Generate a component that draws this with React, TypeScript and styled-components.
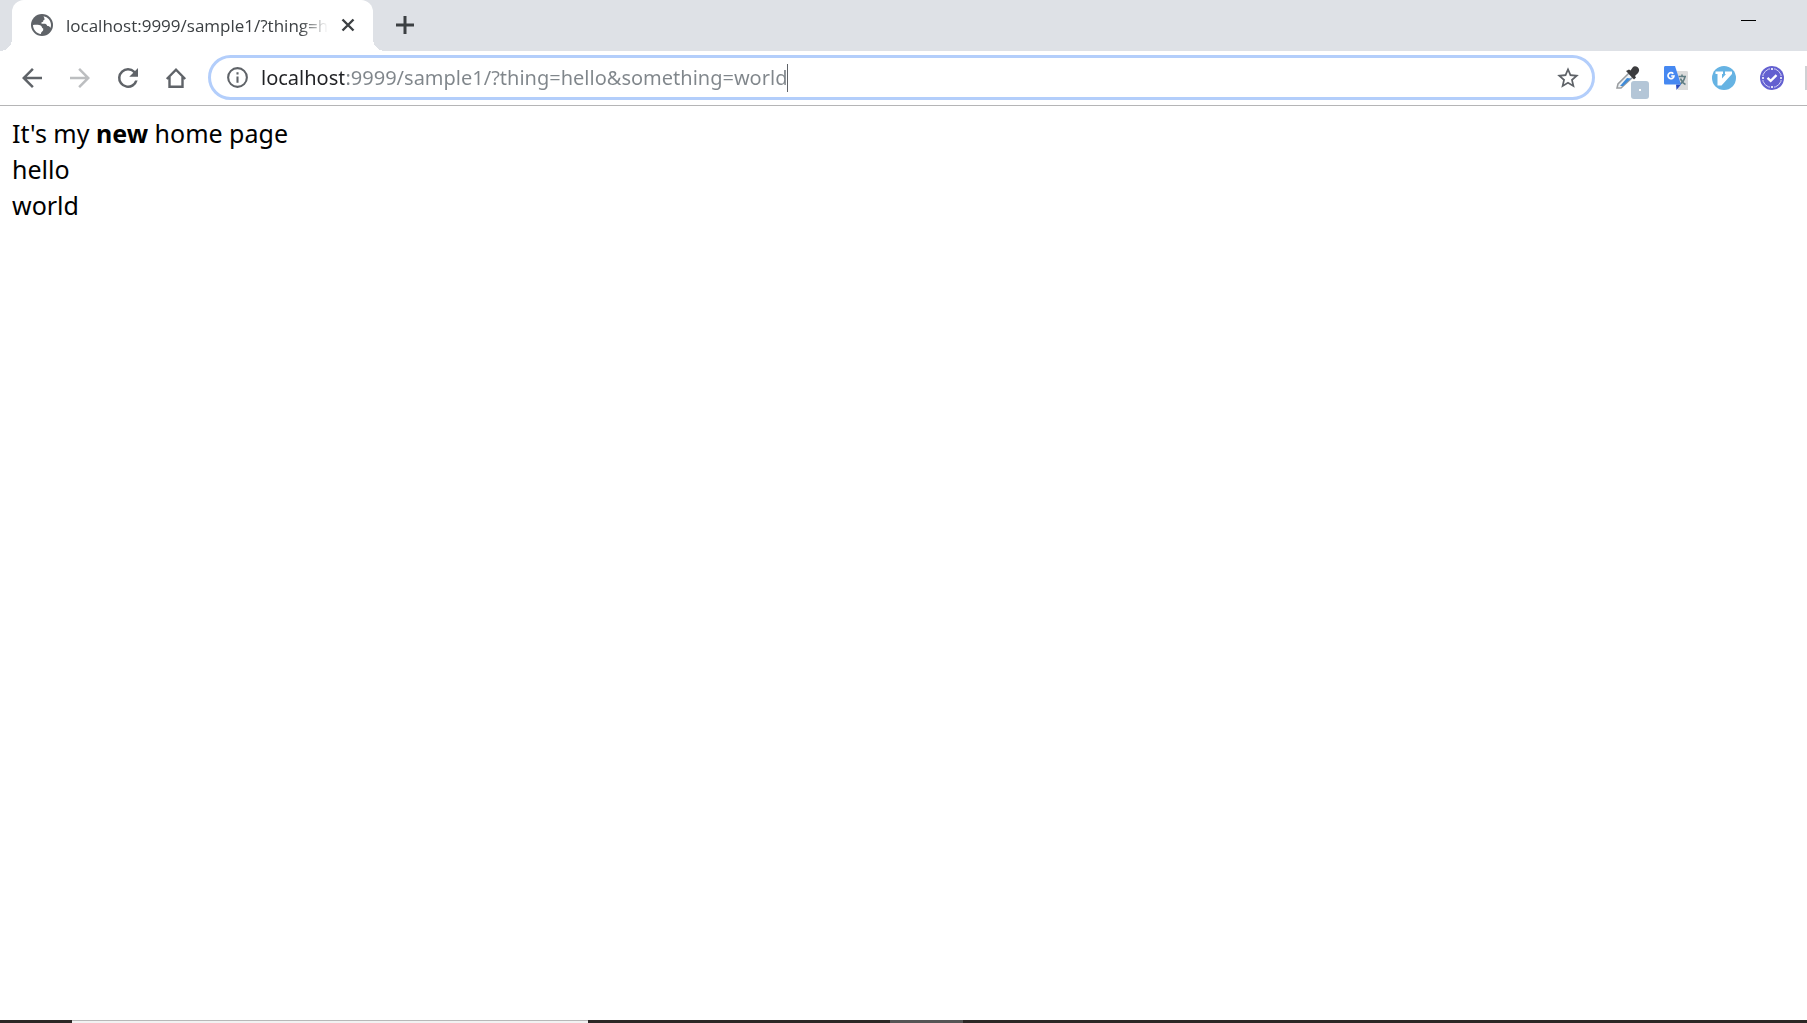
import React from "react";
import styled, { createGlobalStyle } from "styled-components";

const GlobalStyle = createGlobalStyle`
  * { box-sizing: border-box; }
  body { margin: 0; background: #fff; }
`;

const ui = `"Open Sans", "Noto Sans", sans-serif`;

const Window = styled.div`
  display: flex;
  flex-direction: column;
  min-height: 100vh;
  font-family: ${ui};
`;

const TabStrip = styled.header`
  display: flex;
  align-items: stretch;
  height: 51px;
  padding-left: 12px;
  background: #dee1e6;
`;

const Tab = styled.div`
  position: relative;
  display: flex;
  align-items: center;
  width: 361px;
  padding: 0 17px 1px 18px;
  background: #fff;
  border-radius: 12px 12px 0 0;

  &::before,
  &::after {
    content: "";
    position: absolute;
    bottom: 0;
    width: 12px;
    height: 12px;
  }
  &::before {
    right: 100%;
    background: radial-gradient(circle at 0 0, transparent 12px, #fff 12px);
  }
  &::after {
    left: 100%;
    background: radial-gradient(circle at 100% 0, transparent 12px, #fff 12px);
  }
`;

const TabTitle = styled.span`
  flex: 1;
  min-width: 0;
  margin: 0 12px;
  padding-top: 2px;
  overflow: hidden;
  white-space: nowrap;
  font-size: 17px;
  line-height: 24px;
  color: #3c4043;
  mask-image: linear-gradient(to right, #000 calc(100% - 28px), transparent);
`;

const IconButton = styled.button<{ $size?: number; $color?: string }>`
  display: flex;
  flex: none;
  align-items: center;
  justify-content: center;
  width: ${(p) => p.$size ?? 24}px;
  height: ${(p) => p.$size ?? 24}px;
  padding: 0;
  border: 0;
  background: none;
  color: ${(p) => p.$color ?? "#5f6368"};

  svg { flex: none; }
`;

const NewTab = styled(IconButton)`
  margin: 13px 0 0 20px;
`;

const Minimize = styled(IconButton)`
  margin: 8px 46px 0 auto;
`;

const Toolbar = styled.nav`
  display: flex;
  align-items: center;
  gap: 20px;
  padding: 4px 0 5px 20px;
  border-bottom: 1px solid #b5b5b6;
`;

const IconGroup = styled.div`
  display: flex;
  align-items: center;
  gap: 24px;
`;

const Extensions = styled(IconGroup)`
  padding: 0 1px;
`;

const Omnibox = styled.form`
  display: flex;
  flex: 1;
  align-items: center;
  height: 45px;
  padding: 0 12px 0 14px;
  border: 3px solid #b3cefb;
  border-radius: 23px;
`;

const Address = styled.input`
  field-sizing: content;
  margin-left: 12px;
  padding: 1px 0 0;
  border: 0;
  outline: 0;
  font-family: "Noto Sans", "Open Sans", sans-serif;
  font-size: 20px;
  line-height: 28px;
  color: transparent;
  background: linear-gradient(to right, #202124 83px, #80868b 83px);
  background-clip: text;
`;

const Caret = styled.span`
  width: 1px;
  height: 28px;
  margin-right: auto;
  background: #5f6368;
`;

const Divider = styled.span`
  width: 2px;
  height: 24px;
  background: #cfd1d4;
`;

const Badged = styled.span`
  position: relative;
  display: flex;
`;

const Badge = styled.span`
  position: absolute;
  top: 15px;
  left: 15px;
  display: grid;
  place-items: center;
  width: 18px;
  height: 18px;
  border-radius: 3px;
  background: #b4c6d7;

  &::after {
    content: "";
    width: 2px;
    height: 2px;
    background: #fff;
  }
`;

const Page = styled.main`
  flex: 1;
  padding: 9px 12px;
  font-family: "Noto Sans", sans-serif;
  font-size: 25px;
  line-height: 36px;
  color: #000;
`;

const Taskbar = styled.footer`
  display: flex;
  height: 3px;
  background: #2b2725;
`;

const TaskSearch = styled.div`
  width: 516px;
  margin-left: 72px;
  border-top: 1px solid #b8b8b8;
  background: #f2f2f2;
`;

const ActiveTask = styled.div`
  width: 73px;
  margin-left: 302px;
  background: #555;
`;

const Icon = ({ d, size = 30 }: { d: string; size?: number }) => (
  <svg width={size} height={size} viewBox="0 0 24 24" fill="currentColor" aria-hidden="true">
    <path d={d} />
  </svg>
);

const BACK = "M20 11H7.83l5.59-5.59L12 4l-8 8 8 8 1.41-1.41L7.83 13H20v-2z";
const FORWARD = "M12 4l-1.41 1.41L16.17 11H4v2h12.17l-5.58 5.59L12 20l8-8z";
const RELOAD =
  "M17.65 6.35A7.96 7.96 0 0 0 12 4a8 8 0 1 0 7.73 10h-2.08A6 6 0 1 1 12 6c1.66 0 3.14.69 4.22 1.78L13 11h7V4z";
const INFO =
  "M11 7h2v2h-2zm0 4h2v6h-2zm1-9a10 10 0 1 0 0 20 10 10 0 0 0 0-20zm0 18a8 8 0 1 1 0-16 8 8 0 0 1 0 16z";
const STAR =
  "M22 9.24l-7.19-.62L12 2 9.19 8.63 2 9.24l5.46 4.73L5.82 21 12 17.27 18.18 21l-1.63-7.03zM12 15.4l-3.76 2.27 1-4.28-3.32-2.88 4.38-.38L12 6.1l1.71 4.04 4.38.38-3.32 2.88 1 4.28z";

const GlobeIcon = () => (
  <svg width="24" height="24" viewBox="0 0 24 24" aria-hidden="true">
    <circle cx="12" cy="12" r="11" fill="#5f6368" />
    <path
      d="M3 12c3-.3 6.500-.4 8 .8 1.300 1 .4 2.400 2.200 2.700V17c-.3 1.800-2.200 1.400-2.200 4C6.500 20.500 3 16.800 3 12zM13.500 3.200C17.800 4 21 7.600 21 12c0 .9-.2 2-.6 2.900-.5-1.500-1.600-1.900-3-1.900-.8-1.700-1.400-2.200-3.700-2.200H11.500V9.200c2 0 1.800-.8 1.800-1.900 1.700 0 1.500-1.700.2-4.100z"
      fill="#fff"
    />
  </svg>
);

const EyedropperIcon = () => (
  <svg width="24" height="24" viewBox="0 0 24 24" aria-hidden="true">
    <path d="M1 22l1-4L13 7l4 4L5 22z" fill="#eef2f5" stroke="#9a9da0" strokeWidth="1.500" />
    <path d="M4 20l7-8 4 .5L7 20z" fill="#3d8ad8" />
    <path d="M10 5l3-1.500 1.500 1L17 1c2-1.800 7 .2 6 4-.5 2-2.500 3.500-4 5l1 1.500-2 2z" fill="#3c3c3e" />
  </svg>
);

const TranslateIcon = () => (
  <svg width="24" height="24" viewBox="0 0 24 24" aria-hidden="true">
    <path d="M11 5h11.500c1 0 1.500.5 1.500 1.500V24H14z" fill="#dcdcdc" />
    <path d="M14.500 10.500h7.500M18 8.500v2M21 10.500c-.8 4-3 6.500-5 7.500M16.500 12.500c1 3 3 5 5 6" fill="none" stroke="#607d83" strokeWidth="1.600" />
    <path d="M12 18.500h5L12.500 24z" fill="#2a4bc0" />
    <path d="M1.500 0H11l6 18.500H1.500C.5 18.500 0 18 0 17V1.500C0 .5.5 0 1.500 0z" fill="#4688f1" />
    <path d="M9.300 7.700A3 3 0 1 0 10 10H7.200" fill="none" stroke="#fff" strokeWidth="1.700" />
  </svg>
);

const VimIcon = () => (
  <svg width="24" height="24" viewBox="0 0 24 24" aria-hidden="true">
    <circle cx="12" cy="12" r="12" fill="#66b3e3" />
    <path d="M3.500 5.500H11v2.500h-1v4.500l4-4.500h-1V5.500h7V8L9.500 19.500h-4V8h-2z" fill="#fff" />
  </svg>
);

const CheckIcon = () => (
  <svg width="24" height="24" viewBox="0 0 24 24" fill="none" aria-hidden="true">
    <circle cx="12" cy="12" r="12" fill="#6360d0" />
    <circle cx="12" cy="12" r="9.500" stroke="#d5d4f7" strokeWidth="1" />
    <path d="M12 1v4M12 19v4M1 12h4M19 12h4" stroke="#6360d0" strokeWidth="4" />
    <path d="M12 2v2M12 20v2M2 12h2M20 12h2" stroke="#fff" strokeWidth="1.600" />
    <path d="M7.500 11.800l3.200 3 5.800-5.600" stroke="#fff" strokeWidth="2.300" />
  </svg>
);

export default function App() {
  return (
    <Window>
      <GlobalStyle />
      <TabStrip>
        <Tab>
          <GlobeIcon />
          <TabTitle>localhost:9999/sample1/?thing=hello&amp;something=world</TabTitle>
          <IconButton aria-label="Close tab" $size={16} $color="#3c4043">
            <svg width="16" height="16" viewBox="0 0 16 16" stroke="currentColor" strokeWidth="2.400" aria-hidden="true">
              <path d="M2.500 2.500l11 11M13.500 2.500l-11 11" />
            </svg>
          </IconButton>
        </Tab>
        <NewTab aria-label="New tab" $color="#3c4043">
          <svg width="24" height="24" viewBox="0 0 24 24" stroke="currentColor" strokeWidth="3" aria-hidden="true">
            <path d="M3 12h18M12 3v18" />
          </svg>
        </NewTab>
        <Minimize aria-label="Minimize" $color="#000">
          <svg width="16" height="24" viewBox="0 0 16 24" fill="currentColor" aria-hidden="true">
            <path d="M0 12h15v1H0z" />
          </svg>
        </Minimize>
      </TabStrip>

      <Toolbar>
        <IconGroup>
          <IconButton aria-label="Back"><Icon d={BACK} /></IconButton>
          <IconButton aria-label="Forward" $color="#bcbec0"><Icon d={FORWARD} /></IconButton>
          <IconButton aria-label="Reload"><Icon d={RELOAD} /></IconButton>
          <IconButton aria-label="Home">
            <svg width="24" height="24" viewBox="0 0 24 24" fill="none" stroke="currentColor" strokeWidth="2.400" aria-hidden="true">
              <path d="M2.800 13L12 3.700l9.200 9.300M5.500 11v9.800h13V11" />
            </svg>
          </IconButton>
        </IconGroup>

        <Omnibox onSubmit={(e) => e.preventDefault()}>
          <IconButton type="button" aria-label="View site information"><Icon d={INFO} size={25} /></IconButton>
          <Address
            aria-label="Address and search bar"
            spellCheck={false}
            defaultValue="localhost:9999/sample1/?thing=hello&something=world"
          />
          <Caret />
          <IconButton type="button" aria-label="Bookmark this page"><Icon d={STAR} size={26} /></IconButton>
        </Omnibox>

        <Extensions>
          <IconButton aria-label="Eyedropper">
            <Badged><EyedropperIcon /><Badge /></Badged>
          </IconButton>
          <IconButton aria-label="Translate"><TranslateIcon /></IconButton>
          <IconButton aria-label="Vimium"><VimIcon /></IconButton>
          <IconButton aria-label="Tasks"><CheckIcon /></IconButton>
        </Extensions>
        <Divider />
      </Toolbar>

      <Page>
        <div>It's my <b>new</b> home page</div>
        <div>hello</div>
        <div>world</div>
      </Page>

      <Taskbar>
        <TaskSearch />
        <ActiveTask />
      </Taskbar>
    </Window>
  );
}
